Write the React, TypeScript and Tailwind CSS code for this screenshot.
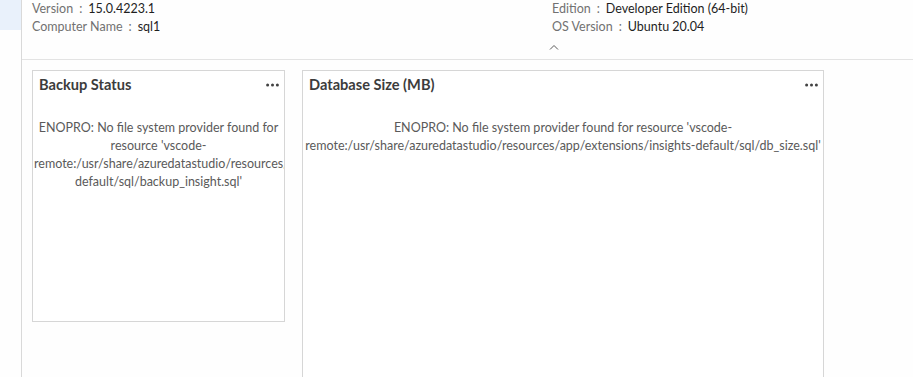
import React from "react";

function Dots() {
  return (
    <svg width="13" height="4" viewBox="0 0 13 4" className="block">
      <circle cx="1.6" cy="2" r="1.5" fill="#424242" />
      <circle cx="6.5" cy="2" r="1.5" fill="#424242" />
      <circle cx="11.4" cy="2" r="1.5" fill="#424242" />
    </svg>
  );
}

function Row({ label, value }: { label: string; value: string }) {
  return (
    <div className="h-[18px] leading-[18px] whitespace-nowrap">
      <span className="text-[#717171]">{label}</span>
      <span className="mx-[6px] text-[#717171]">:</span>
      <span className="text-[#1f1f1f]">{value}</span>
    </div>
  );
}

function Card({
  title,
  lines,
  className,
}: {
  title: string;
  lines: string[];
  className: string;
}) {
  return (
    <div className={"flex shrink-0 flex-col overflow-hidden border border-[#d6d6d6] bg-white " + className}>
      <div className="flex h-[27px] shrink-0 items-center justify-between pl-[6px] pr-[5px]">
        <span className="text-[14.6px] font-bold text-[#3c3c3c]">{title}</span>
        <Dots />
      </div>
      <div className="pt-[21px] px-[1px] text-[12.5px] leading-[18px] text-[#5a5a5a]">
        {lines.map((l, i) => (
          <div key={i} className="whitespace-nowrap text-center">
            {l}
          </div>
        ))}
      </div>
    </div>
  );
}

export default function App() {
  return (
    <div
      className="flex h-[377px] w-[913px] overflow-hidden bg-[#fefefe] text-[12.5px]"
      style={{ fontFamily: "Lato, 'Liberation Sans', sans-serif" }}
    >
      <div className="flex w-[21px] shrink-0 flex-col">
        <div className="h-[30px] bg-[#e9f1fb]" />
      </div>
      <div className="flex min-w-0 flex-1 flex-col border-l border-[#d9d9d9]">
        <div className="h-[60px] shrink-0 border-b border-[#e3e3e3]">
          <div className="flex pl-[10px]">
            <div className="w-[520px] shrink-0">
              <Row label="Version" value="15.0.4223.1" />
              <Row label="Computer Name" value="sql1" />
            </div>
            <div>
              <Row label="Edition" value="Developer Edition (64-bit)" />
              <Row label="OS Version" value="Ubuntu 20.04" />
            </div>
          </div>
          <div className="mt-[8px] pl-[527px]">
            <svg width="10" height="7" viewBox="0 0 10 7" className="block">
              <path d="M1 5.5 L5 1.5 L9 5.5" fill="none" stroke="#5a5a5a" strokeWidth="1" />
            </svg>
          </div>
        </div>
        <div className="flex min-h-0 flex-1 items-start gap-[17px] pl-[10px] pt-[10px]">
          <Card
            className="h-[252px] w-[253px]"
            title="Backup Status"
            lines={[
              "ENOPRO: No file system provider found for",
              "resource 'vscode-",
              "remote:/usr/share/azuredatastudio/resources/app/extensions/insights-",
              "default/sql/backup_insight.sql'",
            ]}
          />
          <Card
            className="h-[320px] w-[522px]"
            title="Database Size (MB)"
            lines={[
              "ENOPRO: No file system provider found for resource 'vscode-",
              "remote:/usr/share/azuredatastudio/resources/app/extensions/insights-default/sql/db_size.sql'",
            ]}
          />
        </div>
      </div>
    </div>
  );
}
